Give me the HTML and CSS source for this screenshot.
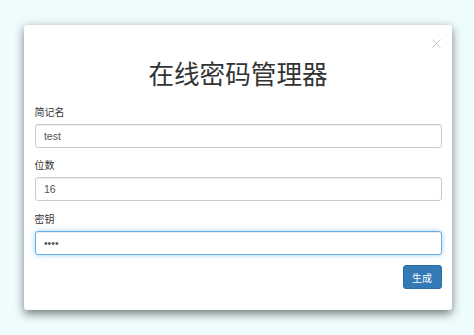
FILE: index.html
```html
<!DOCTYPE html>
<html lang="zh">
<head>
<meta charset="utf-8">
<title>在线密码管理器</title>
<link rel="stylesheet" href="styles.css">
</head>
<body>
<div class="modal">
  <button class="close" type="button" aria-label="Close">
    <svg width="9" height="9" viewBox="0 0 9 9"><path d="M0.5 0.5 L8.5 8.5 M8.5 0.5 L0.5 8.5" stroke="#c4c4c4" stroke-width="1" fill="none"/></svg>
  </button>
  <h1 class="title">在线密码管理器</h1>
  <form class="form">
    <div class="group">
      <label class="label">简记名</label>
      <input class="input" type="text" value="test">
    </div>
    <div class="group">
      <label class="label">位数</label>
      <input class="input" type="text" value="16">
    </div>
    <div class="group">
      <label class="label">密钥</label>
      <input class="input focus" type="password" value="1234">
    </div>
    <div class="actions">
      <button class="btn" type="button">生成</button>
    </div>
  </form>
</div>
</body>
</html>
```
FILE: styles.css
```css
html, body {
  margin: 0;
  padding: 0;
}
body {
  background: #effcfd;
  width: 474px;
  height: 335px;
  font-family: "Liberation Sans", "Noto Sans CJK SC", sans-serif;
  color: #333;
  padding-top: 25px;
  box-sizing: border-box;
}
.modal {
  position: relative;
  margin-left: 24px;
  width: 428px;
  height: 285px;
  box-sizing: border-box;
  background: #fff;
  border-radius: 3px;
  box-shadow: 0 3.5px 10px rgba(0,0,0,0.5);
  padding: 35.5px 10.5px 0 10.5px;
}
.close {
  position: absolute;
  top: 14px;
  right: 11.5px;
  padding: 0;
  margin: 0;
  border: 0;
  background: none;
  width: 9px;
  height: 9px;
  line-height: 0;
}
.title {
  margin: 0 0 17.5px 0;
  font-size: 25.6px;
  line-height: 28px;
  font-weight: 400;
  text-align: center;
  color: #333;
}
.form {
  margin: 0;
}
.group {
  margin-bottom: 11.3px;
}
.label {
  display: block;
  font-size: 10px;
  line-height: 14px;
  margin-bottom: 4px;
  color: #333;
}
.input {
  display: block;
  box-sizing: border-box;
  width: 100%;
  height: 24px;
  margin: 0;
  padding: 0 8.4px;
  font-family: "Liberation Sans", "Noto Sans CJK SC", sans-serif;
  font-size: 10.5px;
  color: #555;
  background: #fff;
  border: 1px solid #ccc;
  border-radius: 3px;
  box-shadow: inset 0 1px 1px rgba(0,0,0,0.075);
  outline: none;
}
.input.focus {
  border-color: #66afe9;
  box-shadow: inset 0 1px 1px rgba(0,0,0,0.075), 0 0 5.6px rgba(102,175,233,0.6);
}
.actions {
  display: flex;
  justify-content: flex-end;
  margin-top: -0.7px;
}
.btn {
  box-sizing: border-box;
  width: 39px;
  height: 24px;
  padding: 0;
  font-family: "Liberation Sans", "Noto Sans CJK SC", sans-serif;
  font-size: 10px;
  color: #fff;
  background: #337ab7;
  border: 1px solid #2e6da4;
  border-radius: 3px;
}
```
